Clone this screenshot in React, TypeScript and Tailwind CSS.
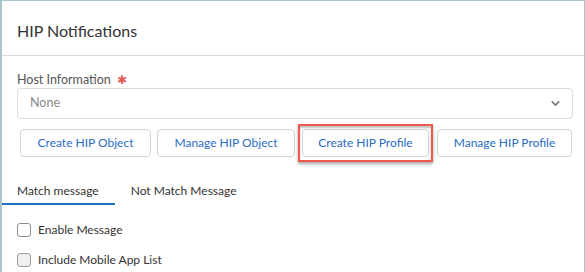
import { ChevronDown } from 'lucide-react'

// HIP Notifications panel

const BUTTONS = [
  { label: 'Create HIP Object', w: 'w-[131px]', ml: '' },
  { label: 'Manage HIP Object', w: 'w-[138px]', ml: 'ml-[6px]' },
  { label: 'Create HIP Profile', w: 'w-[127px]', ml: 'ml-[7px]', highlight: true },
  { label: 'Manage HIP Profile', w: 'w-[135px]', ml: 'ml-[8px]' },
]

export default function App() {
  return (
    <div
      className="w-[585px] h-[272px] overflow-hidden bg-white text-[#333] border-t border-r border-l-2 border-[#a9c3cf]"
      style={{ fontFamily: 'Lato, "Open Sans", sans-serif' }}
    >
      <div className="h-[55px] flex items-center pl-[15px] border-b border-[#d9d9d9]">
        <h1 className="text-[16px] text-[#333] pt-[5px]">HIP Notifications</h1>
      </div>

      <div className="pl-[15px] pr-[10px] pt-[16px]">
        <div className="flex items-center gap-[6px] text-[12.5px] leading-[16px] text-[#555]">
          Host Information
          <span className="text-[#ea5a52] text-[12px] leading-none">✱</span>
        </div>
        <div className="h-[31px] w-[556px] rounded-[4px] border border-[#dcdcdc] flex items-center justify-between pl-[12px] pr-[10px]">
          <span className="text-[12.5px] text-[#8a8a8a]">None</span>
          <ChevronDown size={13} strokeWidth={3} className="text-[#777]" />
        </div>

        <div className="mt-[10px] flex items-center pl-[3px]">
          {BUTTONS.map(b => (
            <span key={b.label} className={`relative ${b.ml}`}>
              <button
                className={`${b.w} h-[28px] rounded-[4px] border border-[#d3d3d3] bg-white text-[12px] text-[#2b6cc4]`}
              >
                {b.label}
              </button>
              {b.highlight && (
                <span className="absolute left-[-4px] right-[-4px] top-[-5px] bottom-[-5px] border-2 border-[#ef5a4c] shadow-[0_2px_3px_rgba(0,0,0,0.35),inset_0_2px_2px_rgba(0,0,0,0.25)] pointer-events-none" />
              )}
            </span>
          ))}
        </div>
      </div>

      <div className="mt-[26px] flex text-[12px] leading-[16px]">
        <div className="pl-[15px] pr-[16px] pb-[4px] border-b-2 border-[#1f6fc5] text-[#333]">Match message</div>
        <div className="pl-[16px] pb-[4px] text-[#333]">Not Match Message</div>
      </div>

      <div className="pl-[15px] pt-[18px] flex flex-col gap-[16px] text-[12px]">
        <label className="h-[14px] flex items-center gap-[7px]">
          <span className="w-[14px] h-[14px] rounded-[3px] border border-[#8f8f8f] bg-white" />
          Enable Message
        </label>
        <label className="h-[14px] flex items-center gap-[7px]">
          <span className="w-[14px] h-[14px] rounded-[3px] border border-[#9a9a9a] bg-[#f0f0f0]" />
          Include Mobile App List
        </label>
      </div>
    </div>
  )
}
